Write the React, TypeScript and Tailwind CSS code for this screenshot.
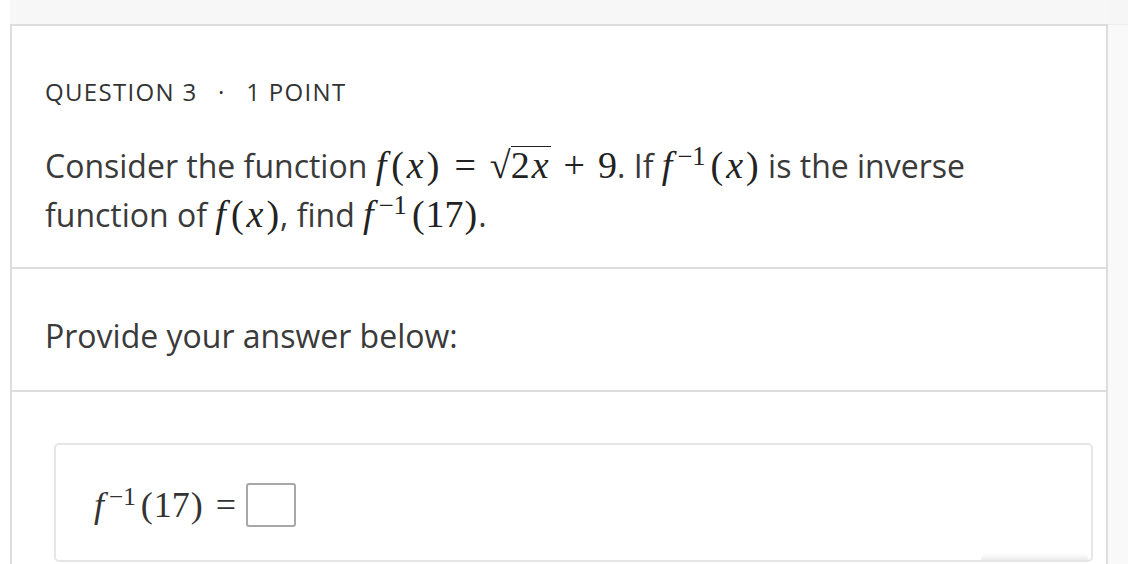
import React from 'react';

const sans = { fontFamily: '"Open Sans", "Noto Sans", sans-serif' };

// italic serif letters, spaced a little wider, like MathJax output
const F = () => <span className="italic mr-[4px]">f</span>;
const X = () => <span className="italic mx-[2px]">x</span>;
const L = () => <span className="mx-[1px]">(</span>;
const R = () => <span className="mx-[1px]">)</span>;

const Inv = () => (
    <sup className="relative -top-[0.48em] align-baseline text-[0.7em] leading-none ml-[1px] mr-[4px]">−1</sup>
);

const Math = ({ children, className = '' }: { children: React.ReactNode; className?: string }) => (
    <span className={`font-['Liberation_Serif','DejaVu_Serif',serif] text-[#222] whitespace-nowrap ${className}`}>{children}</span>
);

export default function App() {
    return (
        <div className="flex h-[564px] bg-white overflow-hidden" style={sans}>
            <div className="w-[10px] shrink-0 bg-white" />

            {/* --- Main column --- */}
            <div className="flex-1 flex flex-col bg-[#f7f7f7]">
                <div className="h-[24px] shrink-0" />

                <div className="flex-1 flex flex-col bg-white border-2 border-b-0 border-[#dddddd]">
                    {/* --- Question --- */}
                    <div className="h-[243px] shrink-0 border-b-2 border-[#dddddd] pl-[33px] pt-[50px]">
                        <p className="text-[24px] leading-[32px] text-[#333] uppercase tracking-[0.055em]">
                            Question 3 <span className="mx-[13px]">·</span> 1 Point
                        </p>
                        <p className="mt-[33px] text-[32px] leading-[49px] text-[#3a3a3a]">
                            Consider the function{' '}
                            <Math className="text-[38px]">
                                <F /><L /><X /><R />
                                <span className="mx-[14px]">=</span>
                                <span>√</span><span className="border-t-[1.5px] border-[#222] leading-[36px] inline-block">2<X /></span>
                                <span className="mx-[13px]">+</span>9
                            </Math>
                            . If{' '}
                            <Math className="text-[38px]"><F /><Inv /><L /><X /><R /></Math> is the inverse
                            <br />
                            function of <Math className="text-[38px]"><F /><L /><X /><R /></Math>, find{' '}
                            <Math className="text-[38px]"><F /><Inv /><L />17<R /></Math>.
                        </p>
                    </div>

                    {/* --- Prompt --- */}
                    <div className="h-[123px] shrink-0 border-b-2 border-[#dddddd] pl-[33px] flex items-center">
                        <p className="text-[32px] text-[#3a3a3a] translate-y-[6px]">Provide your answer below:</p>
                    </div>

                    {/* --- Answer box --- */}
                    <div className="flex-1 pl-[42px] pr-[13px] pt-[51px]">
                        <div className="relative h-[119px] rounded-[5px] border-2 border-[#e6e6e6] bg-white pl-[38px] pt-[33px] overflow-hidden">
                            <div className="flex items-center gap-[10px]">
                                <Math className="text-[36px] text-[#333]">
                                    <F /><Inv /><L />17<R /><span className="ml-[12px]">=</span>
                                </Math>
                                <div className="w-[50px] h-[44px] rounded-[3px] border-2 border-[#a8a8a8] bg-white" />
                            </div>
                            {/* faint shadow of the control below */}
                            <div className="absolute bottom-0 right-[2px] w-[108px] h-[7px] rounded-t-full bg-gradient-to-b from-transparent to-black/[0.07]" />
                        </div>
                    </div>
                </div>
            </div>

            {/* --- Right gutter --- */}
            <div className="w-[20px] shrink-0 flex flex-col">
                <div className="h-[25px] bg-[#f6f6f6] border-b border-[#eeeeee]" />
                <div className="flex-1 bg-[#f9f9f9]" />
            </div>
        </div>
    );
}
